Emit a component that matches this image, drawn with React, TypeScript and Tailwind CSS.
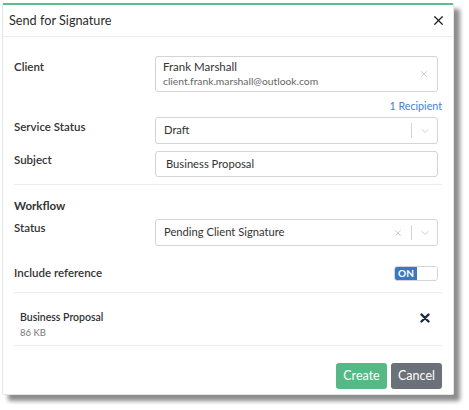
import { X, ChevronDown } from "lucide-react";

const font = { fontFamily: 'Lato, "Open Sans", sans-serif' };

const Label = ({ children, pt }: { children: React.ReactNode; pt: string }) => (
  <div className={`w-[141px] shrink-0 text-[11.5px] font-semibold text-[#333] leading-[16px] ${pt}`}>{children}</div>
);

const SelectBox = ({ value, clearable }: { value: string; clearable?: boolean }) => (
  <div className="w-[283px] h-[27px] flex items-center border border-[#d4d4d4] rounded-[3px] pl-[8px] pr-[6px]">
    <span className="flex-1 text-[11.2px] text-[#333]">{value}</span>
    {clearable && <X className="w-[10px] h-[10px] text-[#b5b5b5] mr-[8px]" strokeWidth={1.5} />}
    <span className="w-px h-[15px] bg-[#d4d4d4] mr-[7px]" />
    <ChevronDown className="w-[12px] h-[12px] text-[#bdbdbd]" strokeWidth={1.5} />
  </div>
);

export default function App() {
  return (
    <div className="w-[469px] h-[410px] bg-white pl-[2px] pt-[3px]" style={font}>
      <div className="w-[452px] h-[392px] flex flex-col bg-white border border-[#e6e6e6] border-t-2 border-t-[#5dbb8c] rounded-[2px] shadow-[6px_6px_4px_rgba(0,0,0,0.45)]">
        <div className="h-[32px] flex items-center justify-between pl-[6px] pr-[7px] border-b border-[#eeeeee]">
          <span className="text-[12.7px] text-[#2b2b2b]">Send for Signature</span>
          <X className="w-[15px] h-[15px] text-[#222]" strokeWidth={2} />
        </div>

        <div className="flex flex-col pl-[11px] pr-[11px] pt-[19px]">
          <div className="flex">
            <Label pt="pt-[3px]">Client</Label>
            <div className="w-[283px] h-[36px] flex items-center border border-[#d4d4d4] rounded-[3px] pl-[7px] pr-[8px]">
              <div className="flex-1 flex flex-col">
                <span className="text-[11.5px] leading-[14px] text-[#333]">Frank Marshall</span>
                <span className="text-[10.3px] leading-[14px] text-[#666]">client.frank.marshall@outlook.com</span>
              </div>
              <X className="w-[10px] h-[10px] text-[#b5b5b5]" strokeWidth={1.5} />
            </div>
          </div>

          <div className="mt-[7px] h-[14px] text-right text-[10.7px] leading-[14px] text-[#3f82d8]">1 Recipient</div>

          <div className="flex mt-[4px]">
            <Label pt="pt-[2px]">Service Status</Label>
            <SelectBox value="Draft" />
          </div>

          <div className="flex mt-[7px]">
            <Label pt="pt-[1px]">Subject</Label>
            <div className="w-[283px] h-[26px] flex items-center border border-[#d4d4d4] rounded-[3px] pl-[10px]">
              <span className="text-[11.2px] text-[#333]">Business Proposal</span>
            </div>
          </div>

          <div className="mt-[7px] h-px bg-[#ececec]" />

          <div className="mt-[13px] text-[11.5px] font-bold text-[#333] leading-[16px]">Workflow</div>

          <div className="flex mt-[5px]">
            <Label pt="pt-[1px]">Status</Label>
            <SelectBox value="Pending Client Signature" clearable />
          </div>

          <div className="flex items-center h-[16px] mt-[19px] w-[424px]">
            <Label pt="pt-0">Include reference</Label>
            <div className="ml-auto w-[44px] h-[15px] flex border border-[#d4d4d4] rounded-[3px] overflow-hidden">
              <div className="w-[22px] bg-[#3b78c0] text-white text-[10px] font-bold flex items-center justify-center">ON</div>
              <div className="flex-1 bg-white" />
            </div>
          </div>

          <div className="mt-[11px] h-px bg-[#ececec]" />

          <div className="flex items-start justify-between pl-[6px] pr-[12px] pt-[17px] h-[52px]">
            <div className="flex flex-col leading-[15px]">
              <span className="text-[10.5px] font-semibold text-[#333]">Business Proposal</span>
              <span className="text-[9.5px] text-[#777]">86 KB</span>
            </div>
            <svg width="10" height="10" viewBox="0 0 10 10" className="mt-[3px]">
              <path d="M1.5 1.5 L8.5 8.5 M8.5 1.5 L1.5 8.5" stroke="#1c2a40" strokeWidth="2.4" strokeLinecap="round" />
            </svg>
          </div>

          <div className="h-px bg-[#ececec]" />

          <div className="flex justify-end gap-[4px] mt-[17px]">
            <button className="w-[51px] h-[26px] rounded-[3px] bg-[#54b985] text-white text-[12.5px]">Create</button>
            <button className="w-[51px] h-[26px] rounded-[3px] bg-[#6b7178] text-white text-[12.5px]">Cancel</button>
          </div>
        </div>
      </div>
    </div>
  );
}
